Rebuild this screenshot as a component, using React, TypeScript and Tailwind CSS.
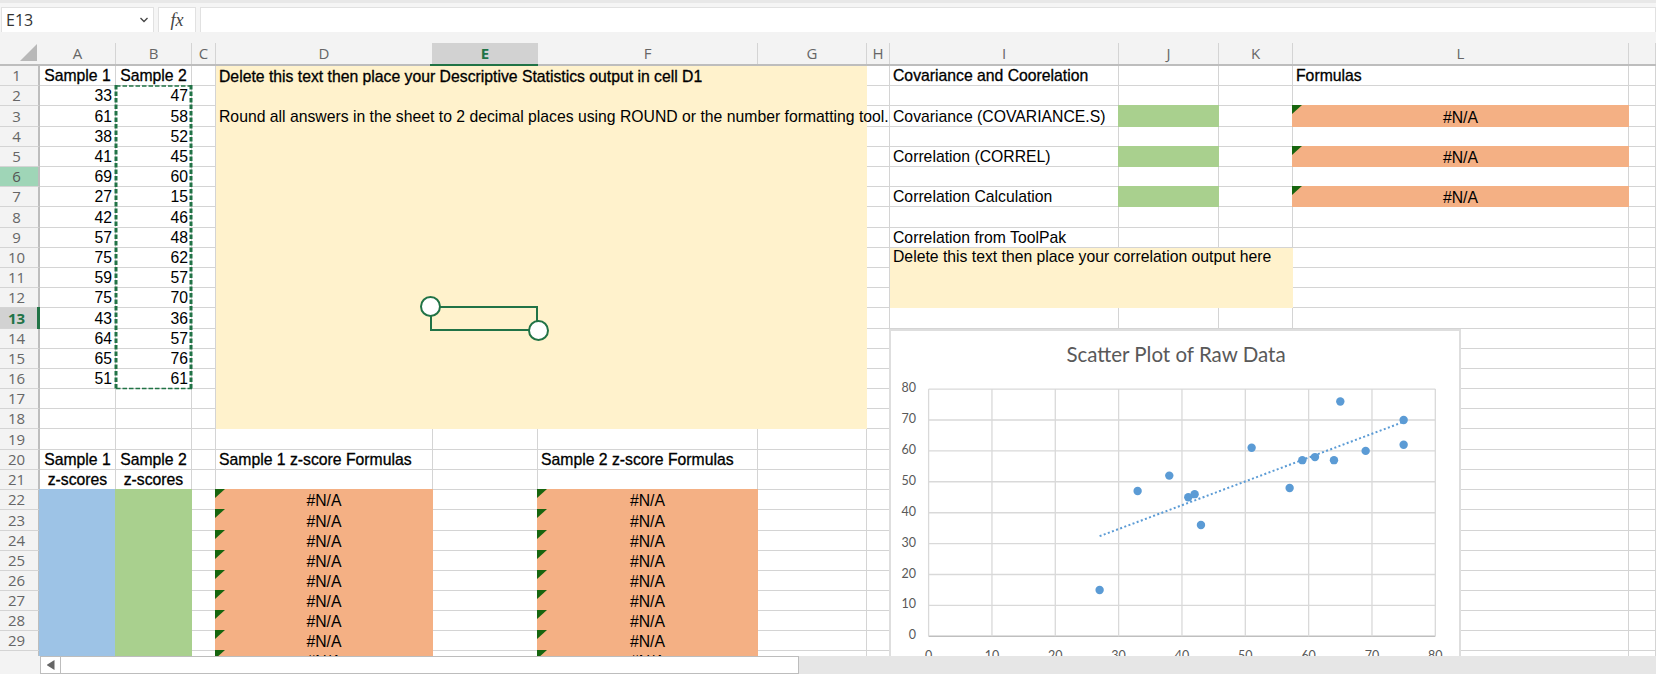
import React from "react";

const SAMPLE_1 = [33, 61, 38, 41, 69, 27, 42, 57, 75, 59, 75, 43, 64, 65, 51];
const SAMPLE_2 = [47, 58, 52, 45, 60, 15, 46, 48, 62, 57, 70, 36, 57, 76, 61];
const COLS = ["A", "B", "C", "D", "E", "F", "G", "H", "I", "J", "K", "L", "M"];
const ROWS = Array.from({ length: 31 }, (_, i) => i + 1);

const gridCell = "border-r border-b border-[#d4d4d4] min-w-0";
const fillCell = "-ml-px -mt-px min-w-0 relative";
const textBase = "flex items-end whitespace-nowrap leading-[18px]";
const heavy = "[-webkit-text-stroke:0.3px_black]";

function Marker() {
  return <span className="absolute left-0 top-0 w-[10px] h-[9px] bg-[#17650f] [clip-path:polygon(0_0,100%_0,0_100%)]" />;
}

function NA() {
  return (
    <div className={`${fillCell} bg-[#f4b084] ${textBase} justify-center`}>
      <Marker />
      #N/A
    </div>
  );
}

function Cell({ r, c }: { r: number; c: string }) {
  const blank = <div className={gridCell} />;
  const left = (t: string, bold = false) => (
    <div className={`${gridCell} ${textBase} pl-[3px] ${bold ? heavy : ""}`}>{t}</div>
  );
  const center = (t: string) => (
    <div className={`${gridCell} ${textBase} justify-center ${heavy}`}>{t}</div>
  );
  const right = (t: number) => <div className={`${gridCell} ${textBase} justify-end pr-[3px]`}>{t}</div>;

  if (c === "A") {
    if (r === 1 || r === 20) return center("Sample 1");
    if (r >= 2 && r <= 16) return right(SAMPLE_1[r - 2]);
    if (r === 21) return center("z-scores");
    if (r >= 22) return <div className={`${fillCell} bg-[#9dc3e6]`} />;
  }
  if (c === "B") {
    if (r === 1 || r === 20) return center("Sample 2");
    if (r >= 2 && r <= 16) return right(SAMPLE_2[r - 2]);
    if (r === 21) return center("z-scores");
    if (r >= 22) return <div className={`${fillCell} bg-[#a9d08e]`} />;
  }
  if (c === "D" || c === "F") {
    if (r === 20) return left(c === "D" ? "Sample 1 z-score Formulas" : "Sample 2 z-score Formulas", true);
    if (r >= 22) return <NA />;
  }
  if (c === "I") {
    if (r === 1) return left("Covariance and Coorelation", true);
    if (r === 3) return left("Covariance (COVARIANCE.S)");
    if (r === 5) return left("Correlation (CORREL)");
    if (r === 7) return left("Correlation Calculation");
    if (r === 9) return left("Correlation from ToolPak");
  }
  if (c === "J" && (r === 3 || r === 5 || r === 7)) return <div className={`${fillCell} bg-[#a9d08e]`} />;
  if (c === "L") {
    if (r === 1) return left("Formulas", true);
    if (r === 3 || r === 5 || r === 7) return <NA />;
  }
  return blank;
}

function isCovered(r: number, c: string) {
  if (r <= 18 && ["D", "E", "F", "G"].includes(c)) return true;
  if (r >= 10 && r <= 12 && ["I", "J", "K"].includes(c)) return true;
  return false;
}

function ScatterChart() {
  const px = (x: number) => 38.6 + x * 6.334;
  const py = (y: number) => 307.3 - y * 3.09;
  const ticks = [0, 10, 20, 30, 40, 50, 60, 70, 80];
  return (
    <div className="absolute left-[889px] top-[297px] w-[572px] h-[345px] bg-white border-2 border-[#dedede]">
      <svg width="568" height="341" viewBox="1 2 568 341" className="block">
        <text x="286" y="33" textAnchor="middle" fontFamily="Lato, sans-serif" fontSize="20.5" fill="#595959">
          Scatter Plot of Raw Data
        </text>
        {ticks.map((t) => (
          <line key={`h${t}`} x1={px(0)} x2={px(80)} y1={py(t)} y2={py(t)} stroke={t === 0 ? "#bfbfbf" : "#d9d9d9"} strokeWidth="1.4" />
        ))}
        {ticks.map((t) => (
          <line key={`v${t}`} y1={py(80)} y2={py(0)} x1={px(t)} x2={px(t)} stroke="#d9d9d9" strokeWidth="1.3" />
        ))}
        {ticks.map((t) => (
          <text key={`y${t}`} x="26" y={py(t) + 3} textAnchor="end" fontFamily="Lato, sans-serif" fontSize="12.5" fill="#595959">
            {t}
          </text>
        ))}
        {ticks.map((t) => (
          <text key={`x${t}`} x={px(t)} y="331" textAnchor="middle" fontFamily="Lato, sans-serif" fontSize="12.5" fill="#595959">
            {t}
          </text>
        ))}
        <line x1={px(27)} y1={py(32.4)} x2={px(75)} y2={py(69.4)} stroke="#5b9bd5" strokeWidth="2" strokeDasharray="2 2.4" />
        {SAMPLE_1.map((x, i) => (
          <circle key={i} cx={px(x)} cy={py(SAMPLE_2[i])} r="4.2" fill="#5b9bd5" />
        ))}
      </svg>
    </div>
  );
}

export default function App() {
  return (
    <div className="w-[1656px] h-[674px] overflow-hidden flex flex-col bg-white text-black font-['Liberation_Sans',Arial,sans-serif] text-[15.75px]">
      {/* formula bar */}
      <div className="h-[33px] shrink-0 flex gap-[4px] pl-[1px] pt-[4px] bg-[#f5f5f5] border-t-[3px] border-[#e8e8e8] -mb-px">
        <div className="w-[153px] flex items-center justify-between bg-white border border-[#e1e1e1] pl-[4px] pr-[4px] font-['Open_Sans',sans-serif] text-[16px] text-[#333]">
          <span>E13</span>
          <svg width="10" height="6" viewBox="0 0 10 6" fill="none" stroke="#444" strokeWidth="1.3">
            <path d="M1.5 1 L5 4.5 L8.5 1" />
          </svg>
        </div>
        <div className="w-[38px] flex items-center justify-center bg-white border border-[#e1e1e1] font-['Liberation_Serif',serif] italic text-[18px] text-[#444]">
          fx
        </div>
        <div className="flex-1 bg-white border border-[#e1e1e1]" />
      </div>

      {/* sheet */}
      <div className="relative flex-1 overflow-hidden bg-white">
        <div className="grid grid-cols-[40px_76px_76px_24px_217px_105px_220px_109px_23px_229px_100px_74px_336px_27px] grid-rows-[34px_20px_20px_21px_20px_20px_20px_20px_21px_20px_20px_20px_20px_21px_20px_20px_20px_20px_20px_21px_20px_20px_20px_21px_20px_20px_20px_20px_20px_20px_20px_20px]">
          {/* corner */}
          <div className="bg-[#f3f3f3] border-b-2 border-[#bdbdbd] flex items-end justify-end pr-[3px] pb-[3px]">
            <div className="w-[17px] h-[17px] bg-[#b8b8b8] [clip-path:polygon(100%_0,100%_100%,0_100%)]" />
          </div>
          {COLS.map((c) => (
            <div key={c} className="bg-[#f3f3f3] pt-[11px] border-b-2 border-[#bdbdbd] relative">
              {c === "E" ? (
                <div className="h-[21px] -ml-px bg-[#d2d2d2] flex items-center justify-center font-bold text-[#217346] font-['Open_Sans',sans-serif] text-[15px]">
                  E
                </div>
              ) : (
                <div className="h-[21px] border-r border-[#d4d4d4] flex items-center justify-center text-[#666] font-['Open_Sans',sans-serif] text-[15px]">
                  {c === "M" ? "" : c}
                </div>
              )}
              {c === "E" && <div className="absolute -left-[3px] -right-[1px] -bottom-[2px] h-[2px] bg-[#217346]" />}
            </div>
          ))}

          {/* yellow output blocks */}
          <div className="col-[5/9] row-[2/20] -ml-px -mt-px bg-[#fff2cc] pl-[4px] pt-[3px] whitespace-nowrap leading-[18px] flex flex-col">
            <div className={`h-[20px] ${heavy}`}>Delete this text then place your Descriptive Statistics output in cell D1</div>
            <div className="h-[20px]" />
            <div className="h-[21px]">Round all answers in the sheet to 2 decimal places using ROUND or the number formatting tool.</div>
          </div>
          <div className="col-[10/13] row-[11/14] -ml-px -mt-px bg-[#fff2cc] pl-[4px] pt-px whitespace-nowrap leading-[18px]">
            Delete this text then place your correlation output here
          </div>

          {ROWS.map((r) => (
            <React.Fragment key={r}>
              <div
                className={`relative flex items-center justify-center pr-[5px] border-r-2 border-b border-r-[#bdbdbd] border-b-[#d4d4d4] font-['Open_Sans',sans-serif] text-[15px] ${
                  r === 13 ? "bg-[#d2d2d2] text-[#217346] font-bold" : r === 6 ? "bg-[#9fd5b7] text-[#555]" : "bg-[#f3f3f3] text-[#666]"
                }`}
              >
                {r}
                {r === 13 && <span className="absolute -right-[2px] -top-px -bottom-px w-[3px] bg-[#217346]" />}
              </div>
              {COLS.map((c) => (isCovered(r, c) ? null : <Cell key={c} r={r} c={c} />))}
            </React.Fragment>
          ))}
        </div>

        {/* copy marquee around B2:B16 */}
        <svg className="absolute left-[114px] top-[53px]" width="80" height="305" viewBox="0 0 80 305" fill="none" stroke="#217346">
          <path d="M2 1 H78" strokeWidth="1.6" strokeDasharray="4.5 2" />
          <path d="M2 303.5 H78" strokeWidth="1.6" strokeDasharray="4.5 2" />
          <path d="M2 0 V304" strokeWidth="3" strokeDasharray="4.5 2" />
          <path d="M77 0 V304" strokeWidth="3" strokeDasharray="4.5 2" />
        </svg>

        <ScatterChart />

        {/* selected shape handles on E13 */}
        <div className="absolute left-[430px] top-[274px] w-[108px] h-[25px] border-2 border-[#217346]">
          <span className="absolute -left-[12px] -top-[12px] w-[21px] h-[21px] rounded-full bg-white border-2 border-[#217346]" />
          <span className="absolute -right-[13px] -bottom-[12px] w-[21px] h-[21px] rounded-full bg-white border-2 border-[#217346]" />
        </div>
      </div>

      {/* horizontal scroll bar */}
      <div className="h-[18px] shrink-0 flex bg-[#e6e6e6]">
        <div className="w-[40px] bg-[#f3f3f3]" />
        <div className="w-[21px] bg-white border border-[#bdbdbd] flex items-center justify-center">
          <span className="w-[8px] h-[10px] bg-[#666] [clip-path:polygon(100%_0,100%_100%,0_50%)]" />
        </div>
        <div className="w-[738px] bg-white border-y border-r border-[#bdbdbd]" />
      </div>
    </div>
  );
}
